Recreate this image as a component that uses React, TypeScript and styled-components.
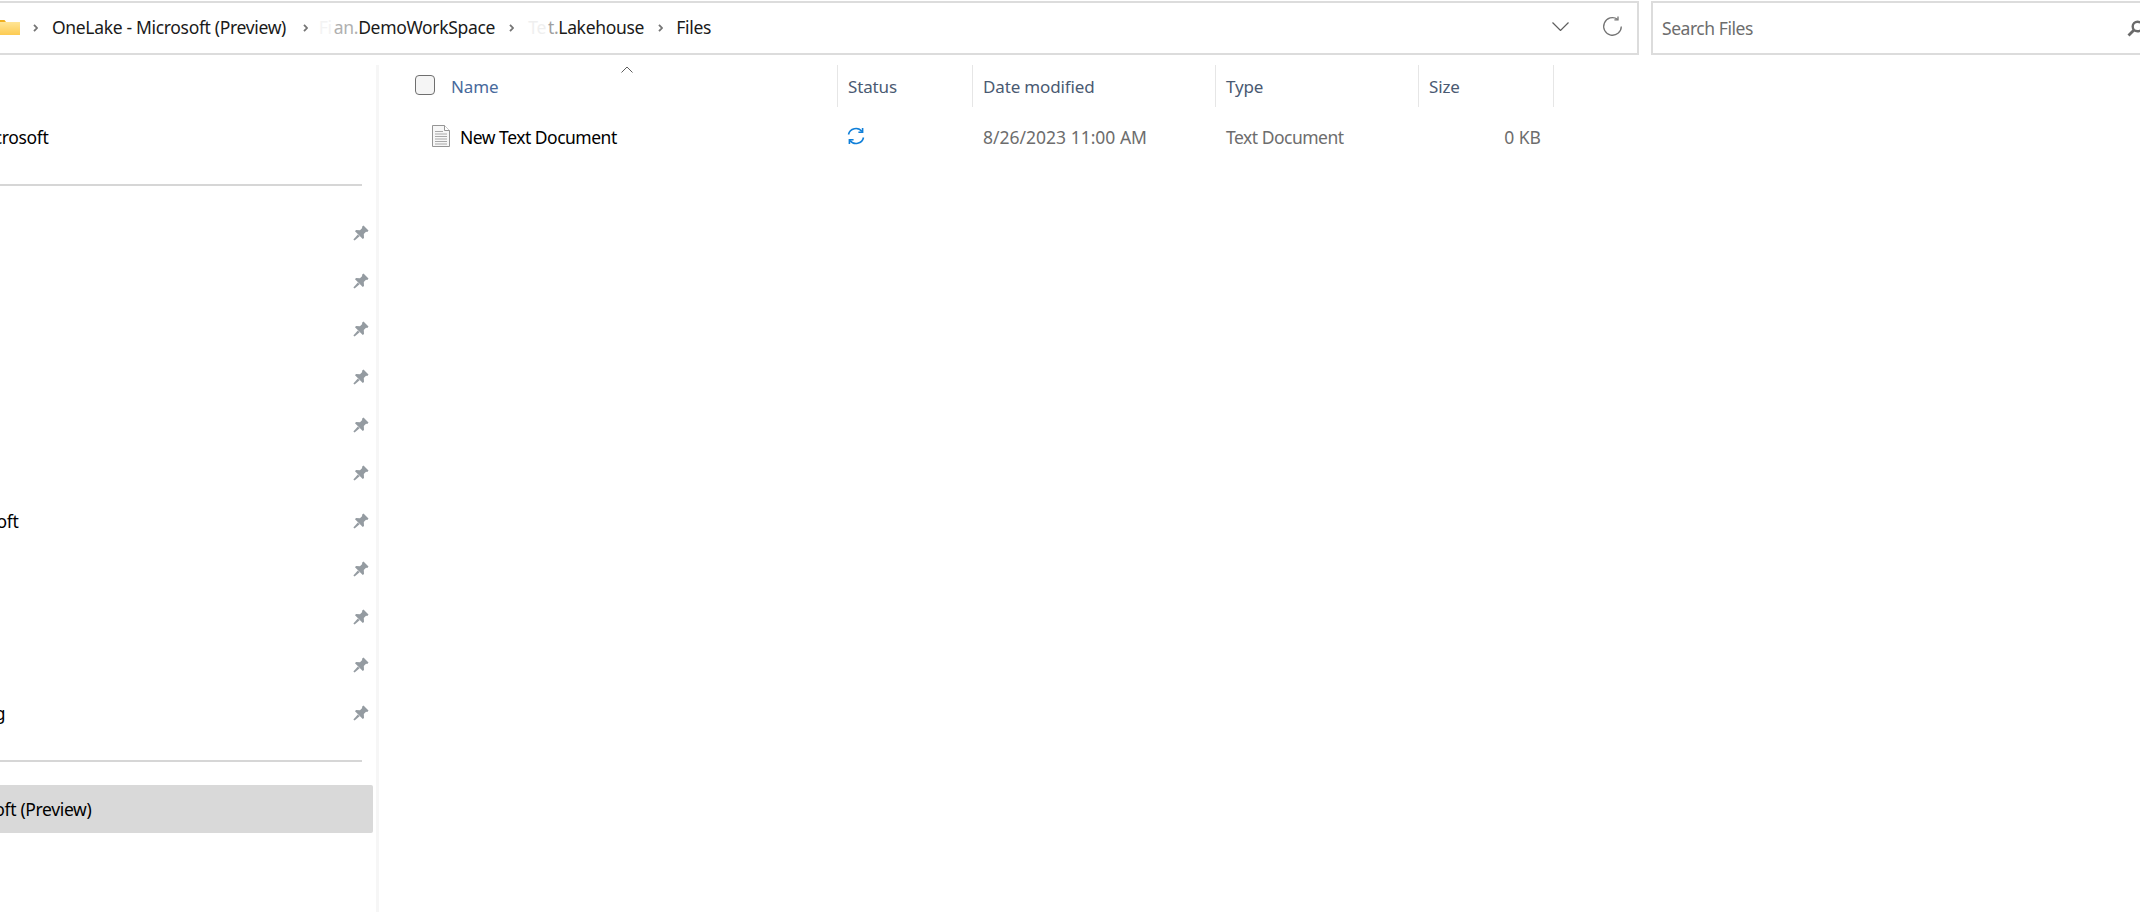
import React from 'react';
import styled, { createGlobalStyle } from 'styled-components';

const GlobalStyle = createGlobalStyle`
  html, body {
    margin: 0;
    padding: 0;
    background: #ffffff;
    overflow: hidden;
  }
  body {
    font-family: 'Noto Sans', 'Open Sans', sans-serif;
    font-size: 17.5px;
    color: #000000;
  }
`;

const Page = styled.div`
  width: 2140px;
  height: 912px;
  overflow: hidden;
  display: flex;
  flex-direction: column;
  background: #ffffff;
`;

const TopBar = styled.div`
  display: flex;
  height: 54px;
  margin-top: 1px;
  gap: 12px;
  flex-shrink: 0;
`;

const AddressBar = styled.div`
  width: 1639px;
  box-sizing: border-box;
  border: 2px solid #dcdcdc;
  border-left: none;
  display: flex;
  align-items: center;
  flex-shrink: 0;
`;

const Crumbs = styled.div`
  flex: 1;
  display: flex;
  align-items: center;
  padding-bottom: 2px;
`;

const Folder = styled.svg`
  width: 20px;
  height: 15px;
  margin-right: -1px;
  flex-shrink: 0;
`;

const Crumb = styled.span<{ $width: number; $pad?: number }>`
  width: ${(p) => p.$width}px;
  box-sizing: border-box;
  padding-right: ${(p) => p.$pad ?? 0}px;
  display: flex;
  justify-content: flex-end;
  white-space: nowrap;
  letter-spacing: -0.33px;
  color: #1a1a1a;
  flex-shrink: 0;
`;

const Wiped = styled.span<{ $tone: string; $gap?: number }>`
  color: ${(p) => p.$tone};
  margin-right: ${(p) => p.$gap ?? 0}px;
`;

const CrumbSep = styled.svg`
  width: 5px;
  height: 8px;
  margin: 2px 15px 0 14px;
  flex-shrink: 0;
`;

const BarActions = styled.div`
  display: flex;
  align-items: center;
  gap: 33px;
  padding: 0 14px 3px 0;
`;

const SearchBox = styled.div`
  flex: 1;
  margin-right: -20px;
  box-sizing: border-box;
  border: 2px solid #dcdcdc;
  display: flex;
  align-items: center;
  justify-content: space-between;
  padding: 0 14px 0 9px;
  color: #6d6d6d;
  letter-spacing: -0.45px;
`;

const Body = styled.div`
  flex: 1;
  display: flex;
  padding-top: 10px;
  min-height: 0;
`;

const Sidebar = styled.nav`
  width: 379px;
  box-sizing: border-box;
  border-right: 3px solid #f6f6f6;
  overflow: hidden;
  display: flex;
  flex-direction: column;
  padding-top: 48px;
  flex-shrink: 0;
`;

const NavRow = styled.div<{ $selected?: boolean }>`
  height: 48px;
  width: 373px;
  flex-shrink: 0;
  display: flex;
  align-items: center;
  justify-content: space-between;
  border-radius: 0 2px 2px 0;
  background: ${(p) => (p.$selected ? '#d9d9d9' : 'transparent')};
  padding-right: 4px;
  box-sizing: border-box;
`;

const NavLabel = styled.span<{ $shift: number }>`
  margin-left: ${(p) => p.$shift}px;
  white-space: nowrap;
  letter-spacing: -0.35px;
`;

const NavDivider = styled.div<{ $gap: number }>`
  width: 362px;
  height: 2px;
  background: #d6d6d6;
  flex-shrink: 0;
  margin: ${(p) => p.$gap}px 0 23px;
`;

const Pin = styled.svg`
  width: 16px;
  height: 16px;
  margin-left: auto;
  fill: #949ba1;
`;

const Content = styled.main`
  flex: 1;
  min-width: 0;
`;

const HeaderRow = styled.div`
  display: flex;
  height: 42px;
  position: relative;
`;

const SelectAll = styled.div`
  width: 20px;
  height: 20px;
  box-sizing: border-box;
  border: 1px solid #6f6f6f;
  border-radius: 4px;
  background: #f5f5f5;
  margin: 10px 16px 0 36px;
  flex-shrink: 0;
`;

const SortCaret = styled.svg`
  position: absolute;
  left: 242px;
  top: 1px;
  width: 12px;
  height: 7px;
`;

const HeaderCell = styled.div<{ $width: number; $first?: boolean }>`
  width: ${(p) => p.$width}px;
  box-sizing: border-box;
  padding-left: ${(p) => (p.$first ? 0 : 10)}px;
  border-right: 1px solid #e6e6e6;
  color: ${(p) => (p.$first ? '#486a9c' : '#4a5a72')};
  font-size: 17px;
  letter-spacing: -0.15px;
  line-height: 44px;
  flex-shrink: 0;
`;

const FileRow = styled.div`
  display: flex;
  align-items: center;
  height: 60px;
  margin-top: -1px;
  color: #6d6d6d;
`;

const NameCell = styled.div`
  width: 468px;
  display: flex;
  align-items: center;
  gap: 10px;
  padding-left: 53px;
  box-sizing: border-box;
  color: #000000;
  letter-spacing: -0.5px;
  flex-shrink: 0;
`;

const FileName = styled.span`
  padding-top: 2px;
`;

const StatusCell = styled.div`
  width: 136px;
  display: flex;
  align-items: center;
  flex-shrink: 0;
`;

const TextCell = styled.div<{ $width: number; $right?: boolean; $tight?: number }>`
  width: ${(p) => p.$width}px;
  padding-top: 2px;
  text-align: ${(p) => (p.$right ? 'right' : 'left')};
  letter-spacing: ${(p) => p.$tight ?? 0}px;
  flex-shrink: 0;
  white-space: nowrap;
`;

const PinIcon = () => (
  <Pin viewBox="0 0 16 16">
    <path d="M10.5.5l5 5L14.3 7 13 6.8 10.8 9l.2 4-1.2 1L2 6.2 3 5l4 .2L9.2 3 9 1.8z" />
    <path d="M4.8 9.4.4 14.4l1.2 1.2 5-4.4z" />
  </Pin>
);

const Separator = () => (
  <CrumbSep viewBox="0 0 5 8">
    <path d="M1 .8 4 4 1 7.2" fill="none" stroke="#757575" strokeWidth="1.8" />
  </CrumbSep>
);

const FolderIcon = () => (
  <Folder viewBox="0 0 20 15">
    <defs>
      <linearGradient id="fold" x1="0" y1="0" x2="0" y2="1">
        <stop offset="0" stopColor="#ffe596" />
        <stop offset="1" stopColor="#fdcb52" />
      </linearGradient>
    </defs>
    <path d="M0 0h4.5L6 2H0z" fill="#f0b020" />
    <path d="M0 2h20v13H0z" fill="url(#fold)" />
  </Folder>
);

const RefreshIcon = () => (
  <svg width="21" height="21" viewBox="0 0 21 21" fill="none" stroke="#747474" strokeWidth="1.3">
    <path d="M15.5 3.2A8.8 8.8 0 1 0 19.3 10.5" />
    <path d="M16 .5v3.4h-3.6" />
  </svg>
);

const ChevronDown = () => (
  <svg width="17" height="9" viewBox="0 0 17 9" fill="none" stroke="#5f5f5f" strokeWidth="1.2">
    <path d="M.5.5l8 8 8-8" />
  </svg>
);

const SearchIcon = () => (
  <svg width="17" height="17" viewBox="0 0 17 17" fill="none" stroke="#6a6a6a" strokeWidth="2.4">
    <circle cx="10.5" cy="6.5" r="4.8" />
    <path d="M7 10 1.5 15.5" strokeWidth="2.8" />
  </svg>
);

const DocIcon = () => (
  <svg width="18" height="22" viewBox="0 0 18 22" style={{ flexShrink: 0 }}>
    <path d="M.5.5h12l5 5v16H.5z" fill="#f7f7f7" stroke="#959595" />
    <path d="M12.5.5v5h5" fill="#ffffff" stroke="#959595" />
    <path d="M3 6.5h8M3 9h12M3 11.5h12M3 14h12M3 16.5h12M3 19h12" stroke="#a8a8a8" />
  </svg>
);

const SyncIcon = () => (
  <svg width="18" height="18" viewBox="0 0 18 18" fill="none" stroke="#0f7fd9" strokeWidth="1.6">
    <path d="M1.5 7.5A7.6 7.6 0 0 1 15 4.5" />
    <path d="M15.6 1v4.2h-4.2" />
    <path d="M16.5 10.5A7.6 7.6 0 0 1 3 13.5" />
    <path d="M2.4 17v-4.2h4.2" />
  </svg>
);

const pinnedLabels: { text: string; shift: number }[] = [
  { text: '', shift: 0 },
  { text: '', shift: 0 },
  { text: '', shift: 0 },
  { text: '', shift: 0 },
  { text: '', shift: 0 },
  { text: '', shift: 0 },
  { text: 'Microsoft', shift: -56 },
  { text: '', shift: 0 },
  { text: '', shift: 0 },
  { text: '', shift: 0 },
  { text: 'Building', shift: -60 },
];

export default function App() {
  return (
    <Page>
      <GlobalStyle />
      <TopBar>
        <AddressBar>
          <Crumbs>
            <FolderIcon />
            <Separator />
            <Crumb $width={236} $pad={3}>OneLake - Microsoft (Preview)</Crumb>
            <Separator />
            <Crumb $width={172}>
              <Wiped $tone="#f3f3f3" $gap={2}>Fi</Wiped>
              <Wiped $tone="#b0b0b0">an.</Wiped>
              DemoWorkSpace
            </Crumb>
            <Separator />
            <Crumb $width={115}>
              <Wiped $tone="#efefef" $gap={2}>Te</Wiped>
              <Wiped $tone="#a0a0a0">t.</Wiped>
              Lakehouse
            </Crumb>
            <Separator />
            <Crumb $width={33}>Files</Crumb>
          </Crumbs>
          <BarActions>
            <ChevronDown />
            <RefreshIcon />
          </BarActions>
        </AddressBar>
        <SearchBox>
          Search Files
          <SearchIcon />
        </SearchBox>
      </TopBar>
      <Body>
        <Sidebar>
          <NavRow>
            <NavLabel $shift={-26}>Microsoft</NavLabel>
          </NavRow>
          <NavDivider $gap={23} />
          {pinnedLabels.map((item, i) => (
            <NavRow key={i}>
              {item.text && <NavLabel $shift={item.shift}>{item.text}</NavLabel>}
              <PinIcon />
            </NavRow>
          ))}
          <NavDivider $gap={23} />
          <NavRow $selected>
            <NavLabel $shift={-142}>OneLake - Microsoft (Preview)</NavLabel>
          </NavRow>
        </Sidebar>
        <Content>
          <HeaderRow>
            <SelectAll />
            <SortCaret viewBox="0 0 12 7">
              <path d="M.5 6.5 6 1l5.5 5.5" fill="none" stroke="#5e5e5e" />
            </SortCaret>
            <HeaderCell $first $width={387}>Name</HeaderCell>
            <HeaderCell $width={135}>Status</HeaderCell>
            <HeaderCell $width={243}>Date modified</HeaderCell>
            <HeaderCell $width={203}>Type</HeaderCell>
            <HeaderCell $width={135}>Size</HeaderCell>
          </HeaderRow>
          <FileRow>
            <NameCell>
              <DocIcon />
              <FileName>New Text Document</FileName>
            </NameCell>
            <StatusCell>
              <SyncIcon />
            </StatusCell>
            <TextCell $width={243}>8/26/2023 11:00 AM</TextCell>
            <TextCell $width={160} $tight={-0.5}>Text Document</TextCell>
            <TextCell $width={155} $right>0 KB</TextCell>
          </FileRow>
        </Content>
      </Body>
    </Page>
  );
}
